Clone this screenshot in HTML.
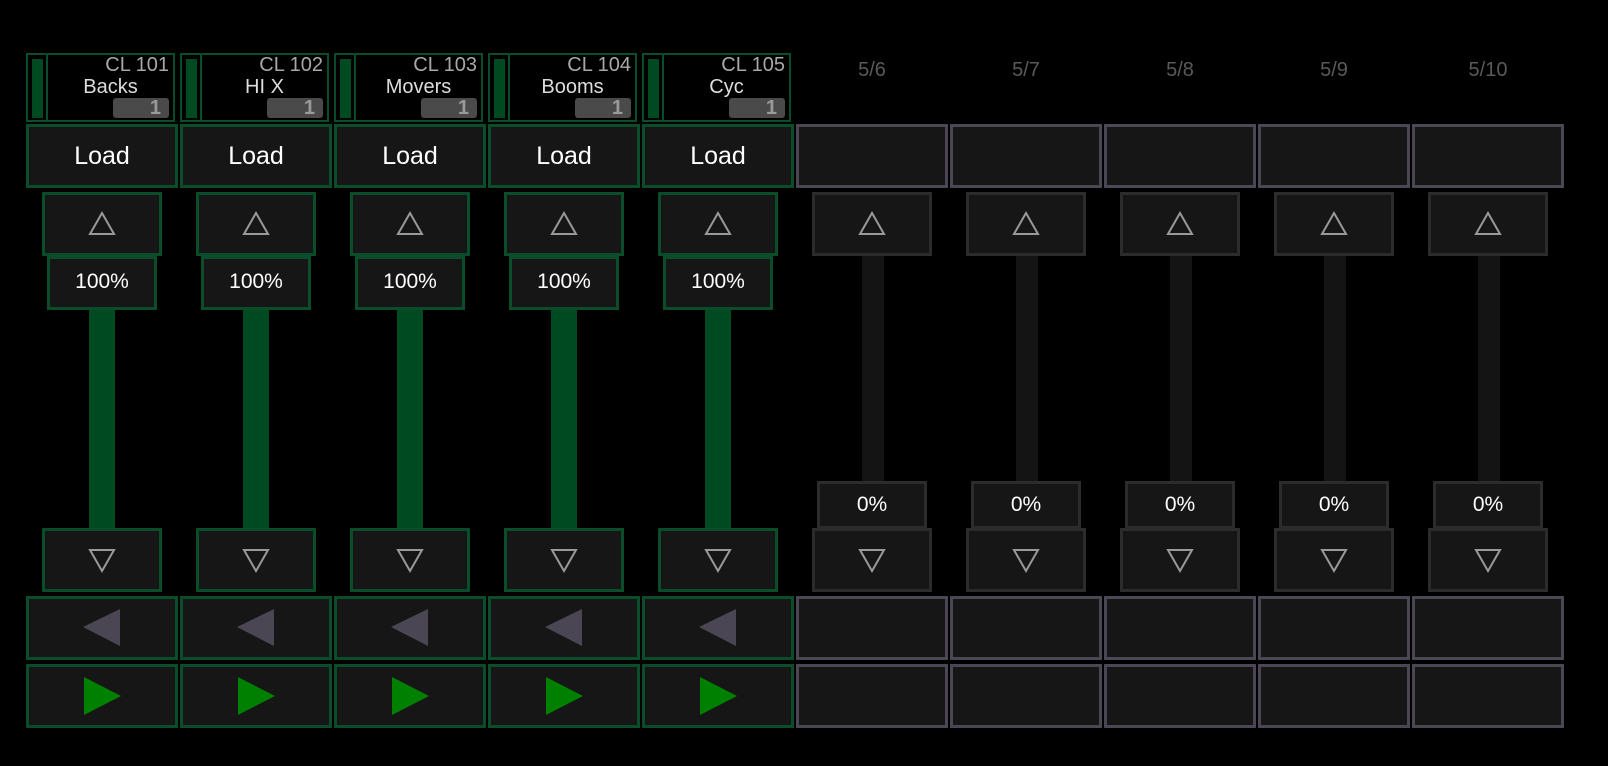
<!DOCTYPE html>
<html><head><meta charset="utf-8"><style>
body{margin:0;width:1608px;height:766px;background:#000;overflow:hidden;font-family:"Liberation Sans",sans-serif;}
.c{position:absolute;top:0;width:152px;height:766px;}
.c>div{position:absolute;box-sizing:border-box;}
.hd{left:0;top:53px;width:149px;height:69px;border:2px solid #0b4d2a;}
.ind{position:absolute;left:4px;top:4px;width:11px;height:59px;background:#004a22;}
.dv{position:absolute;left:18px;top:0;width:2px;height:65px;background:#0b4d2a;}
.cl{position:absolute;right:4px;top:-1px;font-size:20px;color:#a8a8a8;}
.nm{position:absolute;left:20px;right:0;top:21px;text-align:center;font-size:20px;color:#ddd;}
.bd{position:absolute;right:4px;top:43px;width:56px;height:20px;background:#4a4a4a;border-radius:3px;color:#9a9a9a;font-weight:bold;font-size:20px;text-align:right;box-sizing:border-box;padding-right:8px;line-height:20px;}
.ld{left:0;top:124px;width:152px;height:64px;border:3px solid #0b4d2a;background:#161616;color:#fff;font-size:25px;text-align:center;line-height:58px;}
.up,.dn{left:16px;width:120px;height:64px;border:3px solid #0b4d2a;background:#161616;}
.up{top:192px}.dn{top:528px}
.tri{position:absolute;left:0;right:0;top:0;bottom:0;display:flex;align-items:center;justify-content:center;}
.pc{left:21px;width:110px;border:3px solid #0b4d2a;background:#161616;color:#fff;font-size:21px;text-align:center;}
.fd{left:63px;width:26px;top:310px;height:218px;background:#004a22;}
.bk,.go{left:0;width:152px;height:64px;border:3px solid #0b4d2a;background:#161616;}
.bk{top:596px}.go{top:664px}
.in .ld,.in .bk,.in .go{border-color:#4a4654;}
.in .up,.in .dn,.in .pc{border-color:#2c2c2c;}
.in .fd{left:66px;width:22px;top:256px;height:225px;background:#141414;}
.lb{left:0;width:152px;top:59px;text-align:center;font-size:20px;color:#5a5a5a;}
</style></head><body>

<div class="c" style="left:26px">
<div class="hd"><div class="ind"></div><div class="dv"></div><div class="cl">CL 101</div><div class="nm">Backs</div><div class="bd">1</div></div>
<div class="ld">Load</div>
<div class="up"><div class="tri"><svg width="28" height="26"><path d="M14 2 L26 23 L2 23 Z" fill="none" stroke="#999" stroke-width="2"/></svg></div></div>
<div class="pc" style="top:256px;height:54px;line-height:46px">100%</div>
<div class="fd"></div>
<div class="dn"><div class="tri"><svg width="28" height="26"><path d="M2 3 L26 3 L14 24 Z" fill="none" stroke="#999" stroke-width="2"/></svg></div></div>
<div class="bk"><div class="tri"><svg width="40" height="40"><path d="M1 19 L38 1 L38 38 Z" fill="#4a4654"/></svg></div></div>
<div class="go"><div class="tri"><svg width="40" height="40"><path d="M2 1 L39 20 L2 39 Z" fill="#008000"/></svg></div></div>
</div>

<div class="c" style="left:180px">
<div class="hd"><div class="ind"></div><div class="dv"></div><div class="cl">CL 102</div><div class="nm">HI X</div><div class="bd">1</div></div>
<div class="ld">Load</div>
<div class="up"><div class="tri"><svg width="28" height="26"><path d="M14 2 L26 23 L2 23 Z" fill="none" stroke="#999" stroke-width="2"/></svg></div></div>
<div class="pc" style="top:256px;height:54px;line-height:46px">100%</div>
<div class="fd"></div>
<div class="dn"><div class="tri"><svg width="28" height="26"><path d="M2 3 L26 3 L14 24 Z" fill="none" stroke="#999" stroke-width="2"/></svg></div></div>
<div class="bk"><div class="tri"><svg width="40" height="40"><path d="M1 19 L38 1 L38 38 Z" fill="#4a4654"/></svg></div></div>
<div class="go"><div class="tri"><svg width="40" height="40"><path d="M2 1 L39 20 L2 39 Z" fill="#008000"/></svg></div></div>
</div>

<div class="c" style="left:334px">
<div class="hd"><div class="ind"></div><div class="dv"></div><div class="cl">CL 103</div><div class="nm">Movers</div><div class="bd">1</div></div>
<div class="ld">Load</div>
<div class="up"><div class="tri"><svg width="28" height="26"><path d="M14 2 L26 23 L2 23 Z" fill="none" stroke="#999" stroke-width="2"/></svg></div></div>
<div class="pc" style="top:256px;height:54px;line-height:46px">100%</div>
<div class="fd"></div>
<div class="dn"><div class="tri"><svg width="28" height="26"><path d="M2 3 L26 3 L14 24 Z" fill="none" stroke="#999" stroke-width="2"/></svg></div></div>
<div class="bk"><div class="tri"><svg width="40" height="40"><path d="M1 19 L38 1 L38 38 Z" fill="#4a4654"/></svg></div></div>
<div class="go"><div class="tri"><svg width="40" height="40"><path d="M2 1 L39 20 L2 39 Z" fill="#008000"/></svg></div></div>
</div>

<div class="c" style="left:488px">
<div class="hd"><div class="ind"></div><div class="dv"></div><div class="cl">CL 104</div><div class="nm">Booms</div><div class="bd">1</div></div>
<div class="ld">Load</div>
<div class="up"><div class="tri"><svg width="28" height="26"><path d="M14 2 L26 23 L2 23 Z" fill="none" stroke="#999" stroke-width="2"/></svg></div></div>
<div class="pc" style="top:256px;height:54px;line-height:46px">100%</div>
<div class="fd"></div>
<div class="dn"><div class="tri"><svg width="28" height="26"><path d="M2 3 L26 3 L14 24 Z" fill="none" stroke="#999" stroke-width="2"/></svg></div></div>
<div class="bk"><div class="tri"><svg width="40" height="40"><path d="M1 19 L38 1 L38 38 Z" fill="#4a4654"/></svg></div></div>
<div class="go"><div class="tri"><svg width="40" height="40"><path d="M2 1 L39 20 L2 39 Z" fill="#008000"/></svg></div></div>
</div>

<div class="c" style="left:642px">
<div class="hd"><div class="ind"></div><div class="dv"></div><div class="cl">CL 105</div><div class="nm">Cyc</div><div class="bd">1</div></div>
<div class="ld">Load</div>
<div class="up"><div class="tri"><svg width="28" height="26"><path d="M14 2 L26 23 L2 23 Z" fill="none" stroke="#999" stroke-width="2"/></svg></div></div>
<div class="pc" style="top:256px;height:54px;line-height:46px">100%</div>
<div class="fd"></div>
<div class="dn"><div class="tri"><svg width="28" height="26"><path d="M2 3 L26 3 L14 24 Z" fill="none" stroke="#999" stroke-width="2"/></svg></div></div>
<div class="bk"><div class="tri"><svg width="40" height="40"><path d="M1 19 L38 1 L38 38 Z" fill="#4a4654"/></svg></div></div>
<div class="go"><div class="tri"><svg width="40" height="40"><path d="M2 1 L39 20 L2 39 Z" fill="#008000"/></svg></div></div>
</div>

<div class="c in" style="left:796px">
<div class="lb">5/6</div><div class="ld"></div>
<div class="up"><div class="tri"><svg width="28" height="26"><path d="M14 2 L26 23 L2 23 Z" fill="none" stroke="#999" stroke-width="2"/></svg></div></div>
<div class="fd"></div>
<div class="pc" style="top:481px;height:48px;line-height:42px">0%</div>
<div class="dn"><div class="tri"><svg width="28" height="26"><path d="M2 3 L26 3 L14 24 Z" fill="none" stroke="#999" stroke-width="2"/></svg></div></div>
<div class="bk"></div><div class="go"></div>
</div>

<div class="c in" style="left:950px">
<div class="lb">5/7</div><div class="ld"></div>
<div class="up"><div class="tri"><svg width="28" height="26"><path d="M14 2 L26 23 L2 23 Z" fill="none" stroke="#999" stroke-width="2"/></svg></div></div>
<div class="fd"></div>
<div class="pc" style="top:481px;height:48px;line-height:42px">0%</div>
<div class="dn"><div class="tri"><svg width="28" height="26"><path d="M2 3 L26 3 L14 24 Z" fill="none" stroke="#999" stroke-width="2"/></svg></div></div>
<div class="bk"></div><div class="go"></div>
</div>

<div class="c in" style="left:1104px">
<div class="lb">5/8</div><div class="ld"></div>
<div class="up"><div class="tri"><svg width="28" height="26"><path d="M14 2 L26 23 L2 23 Z" fill="none" stroke="#999" stroke-width="2"/></svg></div></div>
<div class="fd"></div>
<div class="pc" style="top:481px;height:48px;line-height:42px">0%</div>
<div class="dn"><div class="tri"><svg width="28" height="26"><path d="M2 3 L26 3 L14 24 Z" fill="none" stroke="#999" stroke-width="2"/></svg></div></div>
<div class="bk"></div><div class="go"></div>
</div>

<div class="c in" style="left:1258px">
<div class="lb">5/9</div><div class="ld"></div>
<div class="up"><div class="tri"><svg width="28" height="26"><path d="M14 2 L26 23 L2 23 Z" fill="none" stroke="#999" stroke-width="2"/></svg></div></div>
<div class="fd"></div>
<div class="pc" style="top:481px;height:48px;line-height:42px">0%</div>
<div class="dn"><div class="tri"><svg width="28" height="26"><path d="M2 3 L26 3 L14 24 Z" fill="none" stroke="#999" stroke-width="2"/></svg></div></div>
<div class="bk"></div><div class="go"></div>
</div>

<div class="c in" style="left:1412px">
<div class="lb">5/10</div><div class="ld"></div>
<div class="up"><div class="tri"><svg width="28" height="26"><path d="M14 2 L26 23 L2 23 Z" fill="none" stroke="#999" stroke-width="2"/></svg></div></div>
<div class="fd"></div>
<div class="pc" style="top:481px;height:48px;line-height:42px">0%</div>
<div class="dn"><div class="tri"><svg width="28" height="26"><path d="M2 3 L26 3 L14 24 Z" fill="none" stroke="#999" stroke-width="2"/></svg></div></div>
<div class="bk"></div><div class="go"></div>
</div>

</body></html>
